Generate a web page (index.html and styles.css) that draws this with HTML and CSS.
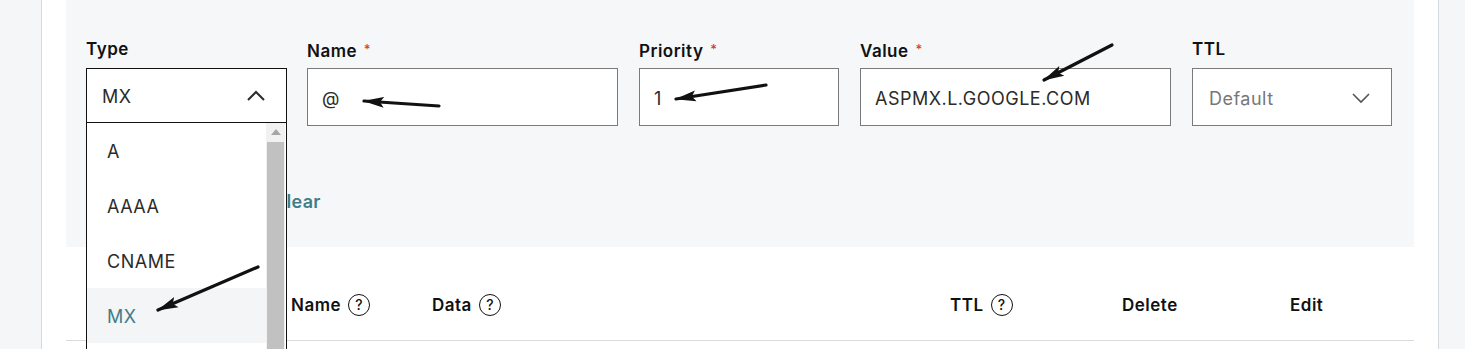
FILE: index.html
```html
<!DOCTYPE html>
<html>
<head>
<meta charset="utf-8">
<link rel="stylesheet" href="styles.css">
</head>
<body>
<div class="page">
  <div class="card">
    <div class="panel">
      <div class="fields">
        <div class="field field-type">
          <div class="label">Type</div>
          <div class="select open">
            <span class="val">MX</span>
            <svg class="chev" width="20" height="12" viewBox="0 0 20 12"><polyline points="2,10 10,2 18,10" fill="none" stroke="#2b2b2b" stroke-width="2"/></svg>
          </div>
          <div class="menu">
            <div class="options">
              <div class="opt">A</div>
              <div class="opt">AAAA</div>
              <div class="opt">CNAME</div>
              <div class="opt active">MX</div>
            </div>
            <div class="scrollbar">
              <div class="sb-up"></div>
              <div class="sb-thumb"></div>
            </div>
          </div>
        </div>
        <div class="field">
          <div class="label">Name <span class="req">*</span></div>
          <div class="input"><span class="val">@</span></div>
        </div>
        <div class="field">
          <div class="label">Priority <span class="req">*</span></div>
          <div class="input"><span class="val">1</span></div>
        </div>
        <div class="field">
          <div class="label">Value <span class="req">*</span></div>
          <div class="input"><span class="val">ASPMX.L.GOOGLE.COM</span></div>
        </div>
        <div class="field">
          <div class="label">TTL</div>
          <div class="input select-ttl">
            <span class="val placeholder">Default</span>
            <svg class="chev" width="20" height="12" viewBox="0 0 20 12"><polyline points="2,2 10,10 18,2" fill="none" stroke="#555" stroke-width="1.6"/></svg>
          </div>
        </div>
      </div>
      <div class="actions"><a class="link">Clear</a></div>
    </div>
    <div class="thead">
      <div class="th">Type</div>
      <div class="th">Name <span class="q">?</span></div>
      <div class="th">Data <span class="q">?</span></div>
      <div class="th">TTL <span class="q">?</span></div>
      <div class="th">Delete</div>
      <div class="th">Edit</div>
    </div>
  </div>
</div>
<svg class="notes" width="1465" height="349" viewBox="0 0 1465 349">
  <defs>
    <marker id="ah" markerUnits="userSpaceOnUse" markerWidth="24" markerHeight="14" refX="20" refY="7" orient="auto">
      <path d="M0,1.5 L21,7 L0,12.5 L4,7 Z" fill="#111"/>
    </marker>
  </defs>
  <g stroke="#111" stroke-width="3.2" stroke-linecap="round" fill="none">
    <line x1="439" y1="106" x2="364" y2="101" marker-end="url(#ah)"/>
    <line x1="766" y1="85" x2="676" y2="99" marker-end="url(#ah)"/>
    <line x1="1112" y1="45" x2="1044" y2="80" marker-end="url(#ah)"/>
    <line x1="258" y1="267" x2="158" y2="310" marker-end="url(#ah)"/>
  </g>
</svg>
</body>
</html>
```
FILE: styles.css
```css
* { box-sizing: border-box; }
html, body { margin: 0; padding: 0; }
body {
  width: 1465px;
  height: 349px;
  overflow: hidden;
  position: relative;
  font-family: Inter, "Liberation Sans", sans-serif;
  color: #111;
}
.page {
  background: #f5f6f8;
  height: 349px;
  padding-left: 41px;
}
.card {
  width: 1398px;
  height: 349px;
  background: #fff;
  border-left: 1px solid #d6dbe0;
  border-right: 1px solid #d6dbe0;
  padding: 0 24px 0 24px;
}
.panel {
  background: #f5f7f8;
  height: 247px;
  padding: 38px 21px 0 20px;
}
.fields {
  display: grid;
  grid-template-columns: 200px 311px 200px 311px 200px;
  column-gap: 21px;
}
.field { position: relative; }
.label {
  font-size: 17px;
  font-weight: 600;
  letter-spacing: 0.5px;
  line-height: 22px;
  height: 22px;
  margin-bottom: 8px;
  color: #111;
}
.req {
  color: #d2412f;
  font-size: 13px;
  font-weight: 500;
  vertical-align: 3px;
  margin-left: 2px;
}
.input, .select {
  height: 58px;
  background: #fff;
  border: 1px solid #7a7a7a;
  display: flex;
  align-items: center;
  padding-left: 14px;
  padding-top: 2px;
  font-size: 18px;
  letter-spacing: 0.5px;
  color: #2b2b2b;
}
.select {
  width: 201px;
  height: 55px;
  border-color: #111;
  padding-left: 15px;
  justify-content: space-between;
  padding-right: 20px;
}
.select .chev { margin-top: -2px; }
.select-ttl {
  justify-content: space-between;
  padding-left: 16px;
  padding-right: 20px;
}
.placeholder { color: #777; }
.chev { display: block; }
.menu {
  position: absolute;
  left: 0;
  top: 85px;
  width: 201px;
  height: 240px;
  background: #fff;
  border-left: 1px solid #111;
  border-right: 1px solid #111;
  display: flex;
  z-index: 5;
}
.options { flex: 1; }
.opt {
  height: 55px;
  display: flex;
  align-items: center;
  padding-left: 20px;
  padding-top: 2px;
  font-size: 18px;
  letter-spacing: 0.5px;
  color: #2b2b2b;
}
.opt.active {
  background: #f3f5f7;
  color: #3f7d88;
}
.scrollbar {
  width: 19px;
  margin-right: 1px;
  background: #f1f1f1;
  display: flex;
  flex-direction: column;
  align-items: center;
}
.sb-up {
  width: 0; height: 0;
  margin-top: 6px;
  border-left: 5px solid transparent;
  border-right: 5px solid transparent;
  border-bottom: 6px solid #a5a5a5;
}
.sb-thumb {
  margin-top: 7px;
  width: 17px;
  flex: 1;
  background: #c1c1c1;
}
.actions {
  margin-top: 65px;
  padding-left: 187px;
  line-height: 22px;
}
.link {
  font-size: 18px;
  font-weight: 600;
  letter-spacing: 0.3px;
  color: #3f7d88;
}
.thead {
  display: grid;
  grid-template-columns: 205px 141px 518px 172px 168px 1fr;
  padding: 47px 0 24px 20px;
  border-bottom: 1px solid #d9dcdf;
}
.th {
  font-size: 17px;
  font-weight: 600;
  letter-spacing: 0.5px;
  line-height: 22px;
  display: flex;
  align-items: center;
  color: #111;
}
.q {
  width: 22px;
  height: 22px;
  border: 1.6px solid #111;
  border-radius: 50%;
  display: inline-flex;
  align-items: center;
  justify-content: center;
  font-size: 14px;
  font-weight: 500;
  letter-spacing: 0;
  margin-left: 7px;
}
.notes {
  position: absolute;
  left: 0;
  top: 0;
  pointer-events: none;
  z-index: 10;
}
```
